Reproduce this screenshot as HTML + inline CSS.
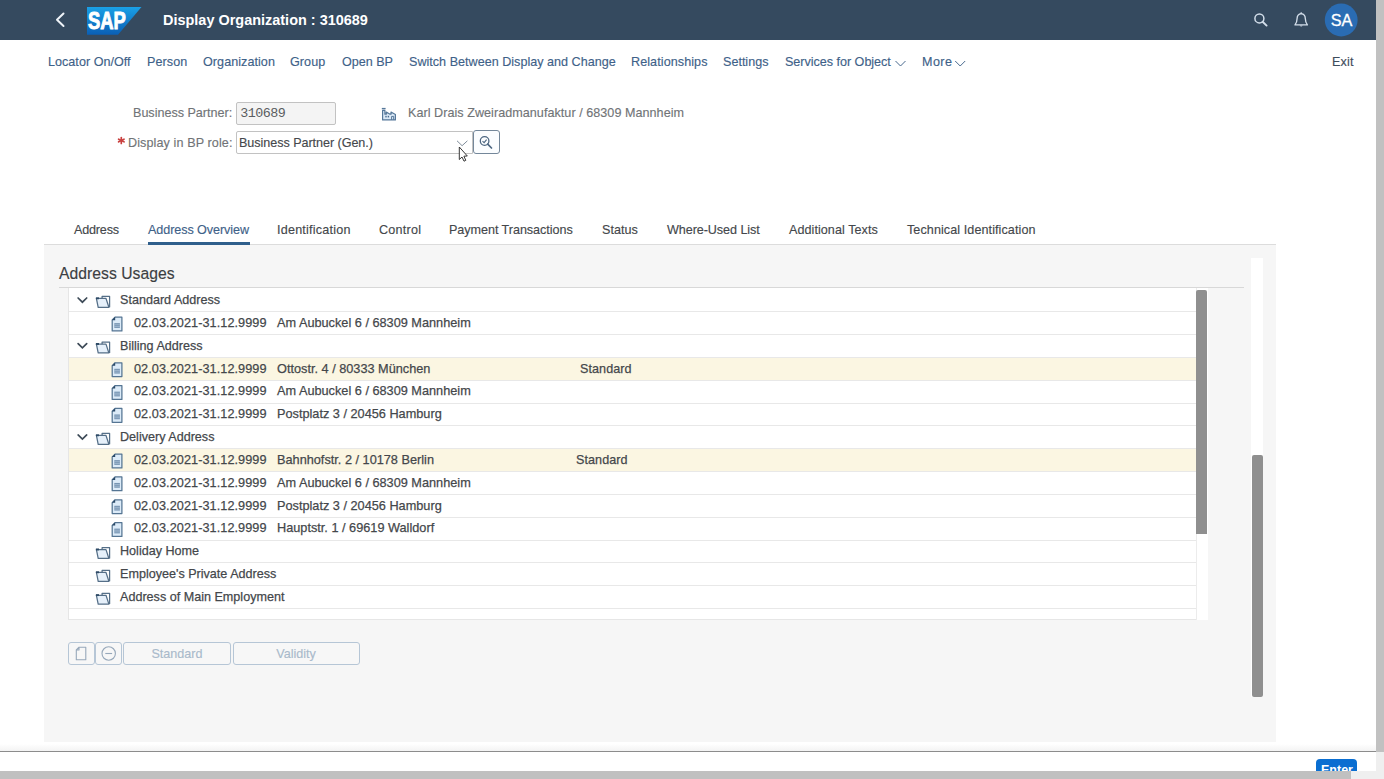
<!DOCTYPE html><html><head><meta charset="utf-8"><style>
html,body{margin:0;padding:0;width:1384px;height:779px;overflow:hidden;background:#fff;}
body{position:relative;font-family:"Liberation Sans", sans-serif;}
.t{position:absolute;white-space:nowrap;}
.r{position:absolute;box-sizing:border-box;}
svg{position:absolute;overflow:visible;}
</style></head><body>
<div class="r" style="left:0px;top:0px;width:1376px;height:40px;background:#354a5f;"></div>
<svg style="left:0;top:0" width="1" height="1"><path d="M63.5 13.5 L57 19.8 L63.5 26" fill="none" stroke="#eef3f8" stroke-width="2" stroke-linecap="round" stroke-linejoin="round"/></svg>
<svg style="left:0;top:0" width="1" height="1"><defs><linearGradient id="sapg" x1="0" y1="0" x2="0" y2="1"><stop offset="0" stop-color="#1aa0e6"/><stop offset="1" stop-color="#0a5fb5"/></linearGradient></defs>
<polygon points="87,7 141.5,7 118,34.7 87,34.7" fill="url(#sapg)"/></svg>
<div class="t" style="left:88.40px;top:9.73px;font-size:23.000px;line-height:23.000px;color:#ffffff;font-weight:bold;font-family:'Liberation Sans', sans-serif;transform:scaleX(0.8);transform-origin:0 0;-webkit-text-stroke:0.9px #fff;">SAP</div>
<div class="t" style="left:163.00px;top:11.80px;font-size:15.472px;line-height:15.472px;color:#ffffff;font-weight:bold;font-family:'Liberation Sans', sans-serif;transform:scaleX(0.9346);transform-origin:0 0;">Display Organization : 310689</div>
<svg style="left:0;top:0" width="1" height="1"><circle cx="1259.4" cy="18.4" r="4.5" fill="none" stroke="#d3deea" stroke-width="1.5"/><path d="M1262.6 21.7 L1266.6 25.6" stroke="#d3deea" stroke-width="1.9" stroke-linecap="round"/></svg>
<svg style="left:0;top:0" width="1" height="1"><path d="M1295 24.9 Q1297 22.6 1297.1 18.6 Q1297.2 14.2 1301.2 13.7 Q1305.2 14.2 1305.3 18.6 Q1305.4 22.6 1307.4 24.9 Z" fill="none" stroke="#d3deea" stroke-width="1.35" stroke-linejoin="round"/><path d="M1299.6 25.6 Q1301.2 27.6 1302.8 25.6 Z" fill="#d3deea"/><circle cx="1301.2" cy="13.1" r="0.9" fill="#d3deea"/></svg>
<svg style="left:0;top:0" width="1" height="1"><circle cx="1341.2" cy="20" r="16.4" fill="#2a6cb3"/></svg>
<div class="t" style="left:1041.60px;width:600px;text-align:center;top:12.28px;font-size:16.200px;line-height:16.200px;color:#ffffff;font-weight:normal;font-family:'Liberation Sans', sans-serif;-webkit-text-stroke:0.3px #fff;">SA</div>
<div class="r" style="left:1376px;top:0px;width:8px;height:752px;background:#c1c1c1;"></div>
<div class="t" style="left:47.99px;top:54.98px;font-size:13.482px;line-height:13.482px;color:#3e6188;font-weight:normal;font-family:'Liberation Sans', sans-serif;transform:scaleX(0.9346);transform-origin:0 0;letter-spacing:0.020px;-webkit-text-stroke:0.15px #3e6188;">Locator On/Off</div>
<div class="t" style="left:146.69px;top:54.98px;font-size:13.482px;line-height:13.482px;color:#3e6188;font-weight:normal;font-family:'Liberation Sans', sans-serif;transform:scaleX(0.9346);transform-origin:0 0;letter-spacing:0.096px;-webkit-text-stroke:0.15px #3e6188;">Person</div>
<div class="t" style="left:202.73px;top:54.98px;font-size:13.482px;line-height:13.482px;color:#3e6188;font-weight:normal;font-family:'Liberation Sans', sans-serif;transform:scaleX(0.9346);transform-origin:0 0;letter-spacing:0.053px;-webkit-text-stroke:0.15px #3e6188;">Organization</div>
<div class="t" style="left:290.27px;top:54.98px;font-size:13.482px;line-height:13.482px;color:#3e6188;font-weight:normal;font-family:'Liberation Sans', sans-serif;transform:scaleX(0.9346);transform-origin:0 0;letter-spacing:0.055px;-webkit-text-stroke:0.15px #3e6188;">Group</div>
<div class="t" style="left:342.03px;top:54.98px;font-size:13.482px;line-height:13.482px;color:#3e6188;font-weight:normal;font-family:'Liberation Sans', sans-serif;transform:scaleX(0.9346);transform-origin:0 0;letter-spacing:-0.017px;-webkit-text-stroke:0.15px #3e6188;">Open BP</div>
<div class="t" style="left:408.63px;top:54.98px;font-size:13.482px;line-height:13.482px;color:#3e6188;font-weight:normal;font-family:'Liberation Sans', sans-serif;transform:scaleX(0.9346);transform-origin:0 0;letter-spacing:0.010px;-webkit-text-stroke:0.15px #3e6188;">Switch Between Display and Change</div>
<div class="t" style="left:631.39px;top:54.98px;font-size:13.482px;line-height:13.482px;color:#3e6188;font-weight:normal;font-family:'Liberation Sans', sans-serif;transform:scaleX(0.9346);transform-origin:0 0;letter-spacing:0.079px;-webkit-text-stroke:0.15px #3e6188;">Relationships</div>
<div class="t" style="left:723.43px;top:54.98px;font-size:13.482px;line-height:13.482px;color:#3e6188;font-weight:normal;font-family:'Liberation Sans', sans-serif;transform:scaleX(0.9346);transform-origin:0 0;letter-spacing:-0.006px;-webkit-text-stroke:0.15px #3e6188;">Settings</div>
<div class="t" style="left:785.13px;top:54.98px;font-size:13.482px;line-height:13.482px;color:#3e6188;font-weight:normal;font-family:'Liberation Sans', sans-serif;transform:scaleX(0.9346);transform-origin:0 0;letter-spacing:-0.028px;-webkit-text-stroke:0.15px #3e6188;">Services for Object</div>
<div class="t" style="left:921.59px;top:54.98px;font-size:13.482px;line-height:13.482px;color:#3e6188;font-weight:normal;font-family:'Liberation Sans', sans-serif;transform:scaleX(0.9346);transform-origin:0 0;letter-spacing:0.467px;-webkit-text-stroke:0.15px #3e6188;">More</div>
<div class="t" style="left:1331.59px;top:55.08px;font-size:13.482px;line-height:13.482px;color:#3e4d5c;font-weight:normal;font-family:'Liberation Sans', sans-serif;transform:scaleX(0.9346);transform-origin:0 0;letter-spacing:0.140px;-webkit-text-stroke:0.15px #3e4d5c;">Exit</div>
<svg style="left:0;top:0" width="1" height="1"><path d="M895.5 61 L900.5 66 L905.5 61" fill="none" stroke="#3e6188" stroke-width="0.95"/><path d="M955.2 61 L960.2 66 L965.2 61" fill="none" stroke="#3e6188" stroke-width="0.95"/></svg>
<div class="t" style="left:133.29px;top:106.08px;font-size:13.482px;line-height:13.482px;color:#717477;font-weight:normal;font-family:'Liberation Sans', sans-serif;transform:scaleX(0.9346);transform-origin:0 0;letter-spacing:-0.012px;-webkit-text-stroke:0.15px #717477;">Business Partner:</div>
<div class="t" style="left:127.99px;top:135.58px;font-size:13.482px;line-height:13.482px;color:#717477;font-weight:normal;font-family:'Liberation Sans', sans-serif;transform:scaleX(0.9346);transform-origin:0 0;letter-spacing:0.110px;-webkit-text-stroke:0.15px #717477;">Display in BP role:</div>
<svg style="left:0;top:0" width="1" height="1"><g stroke="#c9403f" stroke-width="1.7" stroke-linecap="round"><path d="M121.3 137.6 L121.3 143.4"/><path d="M118.6 139.2 L124 141.8"/><path d="M118.6 141.8 L124 139.2"/></g></svg>
<div class="r" style="left:235.5px;top:101.5px;width:100.0px;height:23.0px;background:#f4f4f4;border:1px solid #c2c2c2;border-radius:2px;"></div>
<div class="t" style="left:240.30px;top:107.15px;font-size:13.400px;line-height:13.400px;color:#5a5d61;font-weight:normal;font-family:'Liberation Mono', monospace;letter-spacing:-0.55px;">310689</div>
<div class="r" style="left:235.5px;top:130.8px;width:237.5px;height:23.0px;background:#fff;border:1px solid #c2c2c2;border-radius:2px 0 0 2px;"></div>
<div class="t" style="left:239.39px;top:135.58px;font-size:13.482px;line-height:13.482px;color:#45484c;font-weight:normal;font-family:'Liberation Sans', sans-serif;transform:scaleX(0.9346);transform-origin:0 0;letter-spacing:-0.052px;-webkit-text-stroke:0.15px #45484c;">Business Partner (Gen.)</div>
<svg style="left:0;top:0" width="1" height="1"><path d="M457 140.8 L462.1 145.7 L467.4 140.8" fill="none" stroke="#808d9a" stroke-width="1"/></svg>
<div class="r" style="left:472.6px;top:130.4px;width:27.399999999999977px;height:23.5px;background:#fbfdff;border:1.2px solid #74879a;border-radius:3px;"></div>
<svg style="left:0;top:0" width="1" height="1"><circle cx="484.6" cy="141" r="4.3" fill="none" stroke="#4d6782" stroke-width="1.3"/><path d="M487.7 144.2 L491.5 148" stroke="#4d6782" stroke-width="1.7" stroke-linecap="round"/><path d="M482.5 141.2 L484.1 142.6 L486.6 139.6" fill="none" stroke="#4d6782" stroke-width="1.1"/></svg>
<svg style="left:0;top:0" width="1" height="1"><path d="M459.3 147 L459.3 159.5 L462 157 L464 161.2 L465.8 160.3 L463.9 156.2 L467.3 156 Z" fill="#fff" stroke="#222" stroke-width="0.9" stroke-linejoin="round"/></svg>
<svg style="left:0;top:0" width="1" height="1"><g fill="none" stroke="#557799" stroke-width="1.2" stroke-linejoin="round"><path d="M382.6 110.4 L384.9 110.4 L384.9 114.2 L386.3 114.2 L386.3 112 L390 114.2 L391 114.2 L391 112 L395.4 114.6 L395.4 119.9 L382.6 119.9 Z" fill="#dbe9f7"/><path d="M381.8 108.6 L385.6 108.6" stroke-width="1.4"/><path d="M391.6 119.9 L391.6 116.4 L393.7 116.4 L393.7 119.9" stroke-width="1"/></g><rect x="385.3" y="115.8" width="1.4" height="1.6" fill="#4a6c8e"/><rect x="387.7" y="115.8" width="1.4" height="1.6" fill="#4a6c8e"/></svg>
<div class="t" style="left:408.09px;top:106.18px;font-size:13.482px;line-height:13.482px;color:#717477;font-weight:normal;font-family:'Liberation Sans', sans-serif;transform:scaleX(0.9346);transform-origin:0 0;letter-spacing:0.043px;-webkit-text-stroke:0.15px #717477;">Karl Drais Zweiradmanufaktur / 68309 Mannheim</div>
<div class="t" style="left:73.50px;top:222.88px;font-size:13.482px;line-height:13.482px;color:#44474b;font-weight:normal;font-family:'Liberation Sans', sans-serif;transform:scaleX(0.9346);transform-origin:0 0;letter-spacing:-0.196px;-webkit-text-stroke:0.15px #44474b;">Address</div>
<div class="t" style="left:148.00px;top:222.88px;font-size:13.482px;line-height:13.482px;color:#3e6188;font-weight:normal;font-family:'Liberation Sans', sans-serif;transform:scaleX(0.9346);transform-origin:0 0;letter-spacing:-0.075px;-webkit-text-stroke:0.15px #3e6188;">Address Overview</div>
<div class="t" style="left:277.07px;top:222.88px;font-size:13.482px;line-height:13.482px;color:#44474b;font-weight:normal;font-family:'Liberation Sans', sans-serif;transform:scaleX(0.9346);transform-origin:0 0;letter-spacing:0.231px;-webkit-text-stroke:0.15px #44474b;">Identification</div>
<div class="t" style="left:379.07px;top:222.88px;font-size:13.482px;line-height:13.482px;color:#44474b;font-weight:normal;font-family:'Liberation Sans', sans-serif;transform:scaleX(0.9346);transform-origin:0 0;letter-spacing:0.246px;-webkit-text-stroke:0.15px #44474b;">Control</div>
<div class="t" style="left:449.39px;top:222.88px;font-size:13.482px;line-height:13.482px;color:#44474b;font-weight:normal;font-family:'Liberation Sans', sans-serif;transform:scaleX(0.9346);transform-origin:0 0;letter-spacing:-0.047px;-webkit-text-stroke:0.15px #44474b;">Payment Transactions</div>
<div class="t" style="left:602.13px;top:222.88px;font-size:13.482px;line-height:13.482px;color:#44474b;font-weight:normal;font-family:'Liberation Sans', sans-serif;transform:scaleX(0.9346);transform-origin:0 0;letter-spacing:0.040px;-webkit-text-stroke:0.15px #44474b;">Status</div>
<div class="t" style="left:666.94px;top:222.88px;font-size:13.482px;line-height:13.482px;color:#44474b;font-weight:normal;font-family:'Liberation Sans', sans-serif;transform:scaleX(0.9346);transform-origin:0 0;letter-spacing:-0.075px;-webkit-text-stroke:0.15px #44474b;">Where-Used List</div>
<div class="t" style="left:788.90px;top:222.88px;font-size:13.482px;line-height:13.482px;color:#44474b;font-weight:normal;font-family:'Liberation Sans', sans-serif;transform:scaleX(0.9346);transform-origin:0 0;letter-spacing:0.059px;-webkit-text-stroke:0.15px #44474b;">Additional Texts</div>
<div class="t" style="left:906.95px;top:222.88px;font-size:13.482px;line-height:13.482px;color:#44474b;font-weight:normal;font-family:'Liberation Sans', sans-serif;transform:scaleX(0.9346);transform-origin:0 0;letter-spacing:0.084px;-webkit-text-stroke:0.15px #44474b;">Technical Identification</div>
<div class="r" style="left:43.5px;top:244px;width:1232.5px;height:497.5px;background:#f6f6f6;"></div>
<div class="r" style="left:43.5px;top:243.5px;width:1232.5px;height:1.5px;background:#dcdcdc;"></div>
<div class="r" style="left:148px;top:241.8px;width:101.5px;height:3.0px;background:#2f5f8c;"></div>
<div class="t" style="left:59.00px;top:265.38px;font-size:16.328px;line-height:16.328px;color:#3c3f43;font-weight:normal;font-family:'Liberation Sans', sans-serif;transform:scaleX(0.9615);transform-origin:0 0;letter-spacing:0.040px;-webkit-text-stroke:0.15px #3c3f43;">Address Usages</div>
<div class="r" style="left:59px;top:287.2px;width:1185px;height:1.1999999999999886px;background:#d8d8d8;"></div>
<div class="r" style="left:68px;top:288.4px;width:1139.5px;height:332.1px;background:#fff;border:1px solid #e6e6e6;border-top:none;"></div>
<svg style="left:0;top:0" width="1" height="1"><path d="M78.1 298.0 L82.39999999999999 302.20000000000005 L86.69999999999999 298.0" fill="none" stroke="#3d4a57" stroke-width="1.7" stroke-linecap="round"/></svg>
<svg style="left:0;top:0" width="1" height="1"><g transform="translate(95.6,295.9)" fill="none" stroke="#556f88" stroke-width="1.25" stroke-linejoin="round"><path d="M6.5 3 L6.5 0.6 L14 0.6 L14 11.4" /><path d="M0.8 2.6 L10.4 2.6 L13.3 11.4 L2.6 11.4 Z" fill="#e6f0fa"/><path d="M0.3 2.4 L3.4 2.4" stroke="#2e4a66" stroke-width="1.9"/></g></svg>
<div class="t" style="left:119.60px;top:293.23px;font-size:13.482px;line-height:13.482px;color:#44474b;font-weight:normal;font-family:'Liberation Sans', sans-serif;transform:scaleX(0.9346);transform-origin:0 0;-webkit-text-stroke:0.25px #44474b;">Standard Address</div>
<div class="r" style="left:68.5px;top:311.33px;width:1127.5px;height:1.0px;background:#e8e8e8;"></div>
<svg style="left:0;top:0" width="1" height="1"><g transform="translate(111.6,316.53)"><path d="M3.4 0.6 L10.3 0.6 L10.3 14.4 L0.6 14.4 L0.6 3.4 Z" fill="#dcebf8" stroke="#557593" stroke-width="1.25" stroke-linejoin="round"/><path d="M0.3 3.6 L3.6 0.3 L3.6 3.6 Z" fill="#2b4a68"/><rect x="2.7" y="6.6" width="5.6" height="4.8" fill="#7795b3"/><path d="M2.7 8.2 L8.3 8.2 M2.7 9.9 L8.3 9.9" stroke="#b9cde0" stroke-width="0.6"/></g></svg>
<div class="t" style="left:133.69px;top:315.97px;font-size:13.589px;line-height:13.589px;color:#44474b;font-weight:normal;font-family:'Liberation Sans', sans-serif;transform:scaleX(0.9346);transform-origin:0 0;-webkit-text-stroke:0.25px #44474b;letter-spacing:0.067px;">02.03.2021-31.12.9999</div>
<div class="t" style="left:276.60px;top:315.96px;font-size:13.610px;line-height:13.610px;color:#44474b;font-weight:normal;font-family:'Liberation Sans', sans-serif;transform:scaleX(0.9346);transform-origin:0 0;-webkit-text-stroke:0.25px #44474b;">Am Aubuckel 6 / 68309 Mannheim</div>
<div class="r" style="left:68.5px;top:334.15999999999997px;width:1127.5px;height:1.0px;background:#e8e8e8;"></div>
<svg style="left:0;top:0" width="1" height="1"><path d="M78.1 343.65999999999997 L82.39999999999999 347.86 L86.69999999999999 343.65999999999997" fill="none" stroke="#3d4a57" stroke-width="1.7" stroke-linecap="round"/></svg>
<svg style="left:0;top:0" width="1" height="1"><g transform="translate(95.6,341.55999999999995)" fill="none" stroke="#556f88" stroke-width="1.25" stroke-linejoin="round"><path d="M6.5 3 L6.5 0.6 L14 0.6 L14 11.4" /><path d="M0.8 2.6 L10.4 2.6 L13.3 11.4 L2.6 11.4 Z" fill="#e6f0fa"/><path d="M0.3 2.4 L3.4 2.4" stroke="#2e4a66" stroke-width="1.9"/></g></svg>
<div class="t" style="left:119.60px;top:338.89px;font-size:13.482px;line-height:13.482px;color:#44474b;font-weight:normal;font-family:'Liberation Sans', sans-serif;transform:scaleX(0.9346);transform-origin:0 0;-webkit-text-stroke:0.25px #44474b;">Billing Address</div>
<div class="r" style="left:68.5px;top:357.49px;width:1127.5px;height:22.829999999999984px;background:#fbf6e2;"></div>
<div class="r" style="left:68.5px;top:356.99px;width:1127.5px;height:1.0px;background:#e8e8e8;"></div>
<svg style="left:0;top:0" width="1" height="1"><g transform="translate(111.6,362.19)"><path d="M3.4 0.6 L10.3 0.6 L10.3 14.4 L0.6 14.4 L0.6 3.4 Z" fill="#dcebf8" stroke="#557593" stroke-width="1.25" stroke-linejoin="round"/><path d="M0.3 3.6 L3.6 0.3 L3.6 3.6 Z" fill="#2b4a68"/><rect x="2.7" y="6.6" width="5.6" height="4.8" fill="#7795b3"/><path d="M2.7 8.2 L8.3 8.2 M2.7 9.9 L8.3 9.9" stroke="#b9cde0" stroke-width="0.6"/></g></svg>
<div class="t" style="left:133.69px;top:361.63px;font-size:13.589px;line-height:13.589px;color:#44474b;font-weight:normal;font-family:'Liberation Sans', sans-serif;transform:scaleX(0.9346);transform-origin:0 0;-webkit-text-stroke:0.25px #44474b;letter-spacing:0.067px;">02.03.2021-31.12.9999</div>
<div class="t" style="left:276.60px;top:361.62px;font-size:13.610px;line-height:13.610px;color:#44474b;font-weight:normal;font-family:'Liberation Sans', sans-serif;transform:scaleX(0.9346);transform-origin:0 0;-webkit-text-stroke:0.25px #44474b;">Ottostr. 4 / 80333 München</div>
<div class="t" style="left:579.63px;top:361.72px;font-size:13.482px;line-height:13.482px;color:#44474b;font-weight:normal;font-family:'Liberation Sans', sans-serif;transform:scaleX(0.9346);transform-origin:0 0;-webkit-text-stroke:0.25px #44474b;letter-spacing:0.081px;">Standard</div>
<div class="r" style="left:68.5px;top:379.82px;width:1127.5px;height:1.0px;background:#e8e8e8;"></div>
<svg style="left:0;top:0" width="1" height="1"><g transform="translate(111.6,385.02)"><path d="M3.4 0.6 L10.3 0.6 L10.3 14.4 L0.6 14.4 L0.6 3.4 Z" fill="#dcebf8" stroke="#557593" stroke-width="1.25" stroke-linejoin="round"/><path d="M0.3 3.6 L3.6 0.3 L3.6 3.6 Z" fill="#2b4a68"/><rect x="2.7" y="6.6" width="5.6" height="4.8" fill="#7795b3"/><path d="M2.7 8.2 L8.3 8.2 M2.7 9.9 L8.3 9.9" stroke="#b9cde0" stroke-width="0.6"/></g></svg>
<div class="t" style="left:133.69px;top:384.46px;font-size:13.589px;line-height:13.589px;color:#44474b;font-weight:normal;font-family:'Liberation Sans', sans-serif;transform:scaleX(0.9346);transform-origin:0 0;-webkit-text-stroke:0.25px #44474b;letter-spacing:0.067px;">02.03.2021-31.12.9999</div>
<div class="t" style="left:276.60px;top:384.45px;font-size:13.610px;line-height:13.610px;color:#44474b;font-weight:normal;font-family:'Liberation Sans', sans-serif;transform:scaleX(0.9346);transform-origin:0 0;-webkit-text-stroke:0.25px #44474b;">Am Aubuckel 6 / 68309 Mannheim</div>
<div class="r" style="left:68.5px;top:402.65px;width:1127.5px;height:1.0px;background:#e8e8e8;"></div>
<svg style="left:0;top:0" width="1" height="1"><g transform="translate(111.6,407.84999999999997)"><path d="M3.4 0.6 L10.3 0.6 L10.3 14.4 L0.6 14.4 L0.6 3.4 Z" fill="#dcebf8" stroke="#557593" stroke-width="1.25" stroke-linejoin="round"/><path d="M0.3 3.6 L3.6 0.3 L3.6 3.6 Z" fill="#2b4a68"/><rect x="2.7" y="6.6" width="5.6" height="4.8" fill="#7795b3"/><path d="M2.7 8.2 L8.3 8.2 M2.7 9.9 L8.3 9.9" stroke="#b9cde0" stroke-width="0.6"/></g></svg>
<div class="t" style="left:133.69px;top:407.29px;font-size:13.589px;line-height:13.589px;color:#44474b;font-weight:normal;font-family:'Liberation Sans', sans-serif;transform:scaleX(0.9346);transform-origin:0 0;-webkit-text-stroke:0.25px #44474b;letter-spacing:0.067px;">02.03.2021-31.12.9999</div>
<div class="t" style="left:276.60px;top:407.28px;font-size:13.610px;line-height:13.610px;color:#44474b;font-weight:normal;font-family:'Liberation Sans', sans-serif;transform:scaleX(0.9346);transform-origin:0 0;-webkit-text-stroke:0.25px #44474b;">Postplatz 3 / 20456 Hamburg</div>
<div class="r" style="left:68.5px;top:425.48px;width:1127.5px;height:1.0px;background:#e8e8e8;"></div>
<svg style="left:0;top:0" width="1" height="1"><path d="M78.1 434.98 L82.39999999999999 439.18000000000006 L86.69999999999999 434.98" fill="none" stroke="#3d4a57" stroke-width="1.7" stroke-linecap="round"/></svg>
<svg style="left:0;top:0" width="1" height="1"><g transform="translate(95.6,432.88)" fill="none" stroke="#556f88" stroke-width="1.25" stroke-linejoin="round"><path d="M6.5 3 L6.5 0.6 L14 0.6 L14 11.4" /><path d="M0.8 2.6 L10.4 2.6 L13.3 11.4 L2.6 11.4 Z" fill="#e6f0fa"/><path d="M0.3 2.4 L3.4 2.4" stroke="#2e4a66" stroke-width="1.9"/></g></svg>
<div class="t" style="left:119.60px;top:430.21px;font-size:13.482px;line-height:13.482px;color:#44474b;font-weight:normal;font-family:'Liberation Sans', sans-serif;transform:scaleX(0.9346);transform-origin:0 0;-webkit-text-stroke:0.25px #44474b;">Delivery Address</div>
<div class="r" style="left:68.5px;top:448.81px;width:1127.5px;height:22.829999999999984px;background:#fbf6e2;"></div>
<div class="r" style="left:68.5px;top:448.31px;width:1127.5px;height:1.0px;background:#e8e8e8;"></div>
<svg style="left:0;top:0" width="1" height="1"><g transform="translate(111.6,453.51)"><path d="M3.4 0.6 L10.3 0.6 L10.3 14.4 L0.6 14.4 L0.6 3.4 Z" fill="#dcebf8" stroke="#557593" stroke-width="1.25" stroke-linejoin="round"/><path d="M0.3 3.6 L3.6 0.3 L3.6 3.6 Z" fill="#2b4a68"/><rect x="2.7" y="6.6" width="5.6" height="4.8" fill="#7795b3"/><path d="M2.7 8.2 L8.3 8.2 M2.7 9.9 L8.3 9.9" stroke="#b9cde0" stroke-width="0.6"/></g></svg>
<div class="t" style="left:133.69px;top:452.95px;font-size:13.589px;line-height:13.589px;color:#44474b;font-weight:normal;font-family:'Liberation Sans', sans-serif;transform:scaleX(0.9346);transform-origin:0 0;-webkit-text-stroke:0.25px #44474b;letter-spacing:0.067px;">02.03.2021-31.12.9999</div>
<div class="t" style="left:276.60px;top:452.94px;font-size:13.610px;line-height:13.610px;color:#44474b;font-weight:normal;font-family:'Liberation Sans', sans-serif;transform:scaleX(0.9346);transform-origin:0 0;-webkit-text-stroke:0.25px #44474b;">Bahnhofstr. 2 / 10178 Berlin</div>
<div class="t" style="left:575.93px;top:453.04px;font-size:13.482px;line-height:13.482px;color:#44474b;font-weight:normal;font-family:'Liberation Sans', sans-serif;transform:scaleX(0.9346);transform-origin:0 0;-webkit-text-stroke:0.25px #44474b;letter-spacing:0.081px;">Standard</div>
<div class="r" style="left:68.5px;top:471.14px;width:1127.5px;height:1.0px;background:#e8e8e8;"></div>
<svg style="left:0;top:0" width="1" height="1"><g transform="translate(111.6,476.34)"><path d="M3.4 0.6 L10.3 0.6 L10.3 14.4 L0.6 14.4 L0.6 3.4 Z" fill="#dcebf8" stroke="#557593" stroke-width="1.25" stroke-linejoin="round"/><path d="M0.3 3.6 L3.6 0.3 L3.6 3.6 Z" fill="#2b4a68"/><rect x="2.7" y="6.6" width="5.6" height="4.8" fill="#7795b3"/><path d="M2.7 8.2 L8.3 8.2 M2.7 9.9 L8.3 9.9" stroke="#b9cde0" stroke-width="0.6"/></g></svg>
<div class="t" style="left:133.69px;top:475.78px;font-size:13.589px;line-height:13.589px;color:#44474b;font-weight:normal;font-family:'Liberation Sans', sans-serif;transform:scaleX(0.9346);transform-origin:0 0;-webkit-text-stroke:0.25px #44474b;letter-spacing:0.067px;">02.03.2021-31.12.9999</div>
<div class="t" style="left:276.60px;top:475.77px;font-size:13.610px;line-height:13.610px;color:#44474b;font-weight:normal;font-family:'Liberation Sans', sans-serif;transform:scaleX(0.9346);transform-origin:0 0;-webkit-text-stroke:0.25px #44474b;">Am Aubuckel 6 / 68309 Mannheim</div>
<div class="r" style="left:68.5px;top:493.96999999999997px;width:1127.5px;height:1.0px;background:#e8e8e8;"></div>
<svg style="left:0;top:0" width="1" height="1"><g transform="translate(111.6,499.16999999999996)"><path d="M3.4 0.6 L10.3 0.6 L10.3 14.4 L0.6 14.4 L0.6 3.4 Z" fill="#dcebf8" stroke="#557593" stroke-width="1.25" stroke-linejoin="round"/><path d="M0.3 3.6 L3.6 0.3 L3.6 3.6 Z" fill="#2b4a68"/><rect x="2.7" y="6.6" width="5.6" height="4.8" fill="#7795b3"/><path d="M2.7 8.2 L8.3 8.2 M2.7 9.9 L8.3 9.9" stroke="#b9cde0" stroke-width="0.6"/></g></svg>
<div class="t" style="left:133.69px;top:498.61px;font-size:13.589px;line-height:13.589px;color:#44474b;font-weight:normal;font-family:'Liberation Sans', sans-serif;transform:scaleX(0.9346);transform-origin:0 0;-webkit-text-stroke:0.25px #44474b;letter-spacing:0.067px;">02.03.2021-31.12.9999</div>
<div class="t" style="left:276.60px;top:498.60px;font-size:13.610px;line-height:13.610px;color:#44474b;font-weight:normal;font-family:'Liberation Sans', sans-serif;transform:scaleX(0.9346);transform-origin:0 0;-webkit-text-stroke:0.25px #44474b;">Postplatz 3 / 20456 Hamburg</div>
<div class="r" style="left:68.5px;top:516.8px;width:1127.5px;height:1.0px;background:#e8e8e8;"></div>
<svg style="left:0;top:0" width="1" height="1"><g transform="translate(111.6,522.0)"><path d="M3.4 0.6 L10.3 0.6 L10.3 14.4 L0.6 14.4 L0.6 3.4 Z" fill="#dcebf8" stroke="#557593" stroke-width="1.25" stroke-linejoin="round"/><path d="M0.3 3.6 L3.6 0.3 L3.6 3.6 Z" fill="#2b4a68"/><rect x="2.7" y="6.6" width="5.6" height="4.8" fill="#7795b3"/><path d="M2.7 8.2 L8.3 8.2 M2.7 9.9 L8.3 9.9" stroke="#b9cde0" stroke-width="0.6"/></g></svg>
<div class="t" style="left:133.69px;top:521.44px;font-size:13.589px;line-height:13.589px;color:#44474b;font-weight:normal;font-family:'Liberation Sans', sans-serif;transform:scaleX(0.9346);transform-origin:0 0;-webkit-text-stroke:0.25px #44474b;letter-spacing:0.067px;">02.03.2021-31.12.9999</div>
<div class="t" style="left:276.60px;top:521.43px;font-size:13.610px;line-height:13.610px;color:#44474b;font-weight:normal;font-family:'Liberation Sans', sans-serif;transform:scaleX(0.9346);transform-origin:0 0;-webkit-text-stroke:0.25px #44474b;">Hauptstr. 1 / 69619 Walldorf</div>
<div class="r" style="left:68.5px;top:539.63px;width:1127.5px;height:1.0px;background:#e8e8e8;"></div>
<svg style="left:0;top:0" width="1" height="1"><g transform="translate(95.6,547.03)" fill="none" stroke="#556f88" stroke-width="1.25" stroke-linejoin="round"><path d="M6.5 3 L6.5 0.6 L14 0.6 L14 11.4" /><path d="M0.8 2.6 L10.4 2.6 L13.3 11.4 L2.6 11.4 Z" fill="#e6f0fa"/><path d="M0.3 2.4 L3.4 2.4" stroke="#2e4a66" stroke-width="1.9"/></g></svg>
<div class="t" style="left:119.60px;top:544.36px;font-size:13.482px;line-height:13.482px;color:#44474b;font-weight:normal;font-family:'Liberation Sans', sans-serif;transform:scaleX(0.9346);transform-origin:0 0;-webkit-text-stroke:0.25px #44474b;">Holiday Home</div>
<div class="r" style="left:68.5px;top:562.46px;width:1127.5px;height:1.0px;background:#e8e8e8;"></div>
<svg style="left:0;top:0" width="1" height="1"><g transform="translate(95.6,569.86)" fill="none" stroke="#556f88" stroke-width="1.25" stroke-linejoin="round"><path d="M6.5 3 L6.5 0.6 L14 0.6 L14 11.4" /><path d="M0.8 2.6 L10.4 2.6 L13.3 11.4 L2.6 11.4 Z" fill="#e6f0fa"/><path d="M0.3 2.4 L3.4 2.4" stroke="#2e4a66" stroke-width="1.9"/></g></svg>
<div class="t" style="left:119.60px;top:567.19px;font-size:13.482px;line-height:13.482px;color:#44474b;font-weight:normal;font-family:'Liberation Sans', sans-serif;transform:scaleX(0.9346);transform-origin:0 0;-webkit-text-stroke:0.25px #44474b;">Employee's Private Address</div>
<div class="r" style="left:68.5px;top:585.29px;width:1127.5px;height:1.0px;background:#e8e8e8;"></div>
<svg style="left:0;top:0" width="1" height="1"><g transform="translate(95.6,592.6899999999999)" fill="none" stroke="#556f88" stroke-width="1.25" stroke-linejoin="round"><path d="M6.5 3 L6.5 0.6 L14 0.6 L14 11.4" /><path d="M0.8 2.6 L10.4 2.6 L13.3 11.4 L2.6 11.4 Z" fill="#e6f0fa"/><path d="M0.3 2.4 L3.4 2.4" stroke="#2e4a66" stroke-width="1.9"/></g></svg>
<div class="t" style="left:119.60px;top:590.02px;font-size:13.482px;line-height:13.482px;color:#44474b;font-weight:normal;font-family:'Liberation Sans', sans-serif;transform:scaleX(0.9346);transform-origin:0 0;-webkit-text-stroke:0.25px #44474b;">Address of Main Employment</div>
<div class="r" style="left:68.5px;top:608.12px;width:1127.5px;height:1.0px;background:#e8e8e8;"></div>
<div class="r" style="left:1196px;top:288.2px;width:11.5px;height:332.3px;background:#fff;border-left:1px solid #ececec;"></div>
<div class="r" style="left:1196.3px;top:289.5px;width:10.900000000000091px;height:244.5px;background:#8f8f8f;border-radius:2px 2px 0 0;"></div>
<div class="r" style="left:1251px;top:258px;width:12px;height:439px;background:#fff;"></div>
<div class="r" style="left:1251.6px;top:454.5px;width:11.200000000000045px;height:242.5px;background:#8f8f8f;border-radius:2px;"></div>
<div class="r" style="left:67.8px;top:642.2px;width:26.900000000000006px;height:22.59999999999991px;background:#f7f7f7;border:1px solid #b6c6d6;border-radius:3px;"></div>
<div class="r" style="left:95.4px;top:642.2px;width:26.19999999999999px;height:22.59999999999991px;background:#f7f7f7;border:1px solid #b6c6d6;border-radius:3px;"></div>
<div class="r" style="left:122.7px;top:642.2px;width:108.60000000000001px;height:22.59999999999991px;background:#f7f7f7;border:1px solid #b6c6d6;border-radius:3px;"></div>
<div class="r" style="left:232.5px;top:642.2px;width:127.19999999999999px;height:22.59999999999991px;background:#f7f7f7;border:1px solid #b6c6d6;border-radius:3px;"></div>
<div class="t" style="left:-123.00px;width:600px;text-align:center;top:647.18px;font-size:13.482px;line-height:13.482px;color:#a9bacb;font-weight:normal;font-family:'Liberation Sans', sans-serif;transform:scaleX(0.9346);transform-origin:50% 0;-webkit-text-stroke:0.15px #a9bacb;">Standard</div>
<div class="t" style="left:-4.50px;width:600px;text-align:center;top:647.18px;font-size:13.482px;line-height:13.482px;color:#a9bacb;font-weight:normal;font-family:'Liberation Sans', sans-serif;transform:scaleX(0.9346);transform-origin:50% 0;-webkit-text-stroke:0.15px #a9bacb;">Validity</div>
<svg style="left:0;top:0" width="1" height="1"><path d="M79 647.2 L85.8 647.2 L85.8 659.7 L76.3 659.7 L76.3 650 Z M76.3 650 L79 650 L79 647.2" fill="none" stroke="#97a8ba" stroke-width="1.1" stroke-linejoin="round"/><circle cx="108.7" cy="653.5" r="6.7" fill="none" stroke="#97a8ba" stroke-width="1.1"/><path d="M105.3 653.5 L112.1 653.5" stroke="#97a8ba" stroke-width="1.1"/></svg>
<div class="r" style="left:0px;top:744px;width:1376px;height:7px;background:linear-gradient(#ffffff,#f3f3f3);"></div>
<div class="r" style="left:0px;top:750.6px;width:1376px;height:1.6000000000000227px;background:#8c8c8c;"></div>
<div class="r" style="left:1376px;top:752px;width:8px;height:27px;background:#efefef;"></div>
<div class="r" style="left:1316.2px;top:759px;width:41.09999999999991px;height:16px;background:#0a6ed1;border-radius:4px 4px 0 0;"></div>
<div class="t" style="left:1037.00px;width:600px;text-align:center;top:763.08px;font-size:13.375px;line-height:13.375px;color:#fff;font-weight:bold;font-family:'Liberation Sans', sans-serif;transform:scaleX(0.9346);transform-origin:50% 0;">Enter</div>
<div class="r" style="left:0px;top:770.5px;width:1351px;height:8.5px;background:#c0c0c0;"></div>
<div class="r" style="left:1351px;top:770.5px;width:25px;height:8.5px;background:#efefef;"></div>
</body></html>
